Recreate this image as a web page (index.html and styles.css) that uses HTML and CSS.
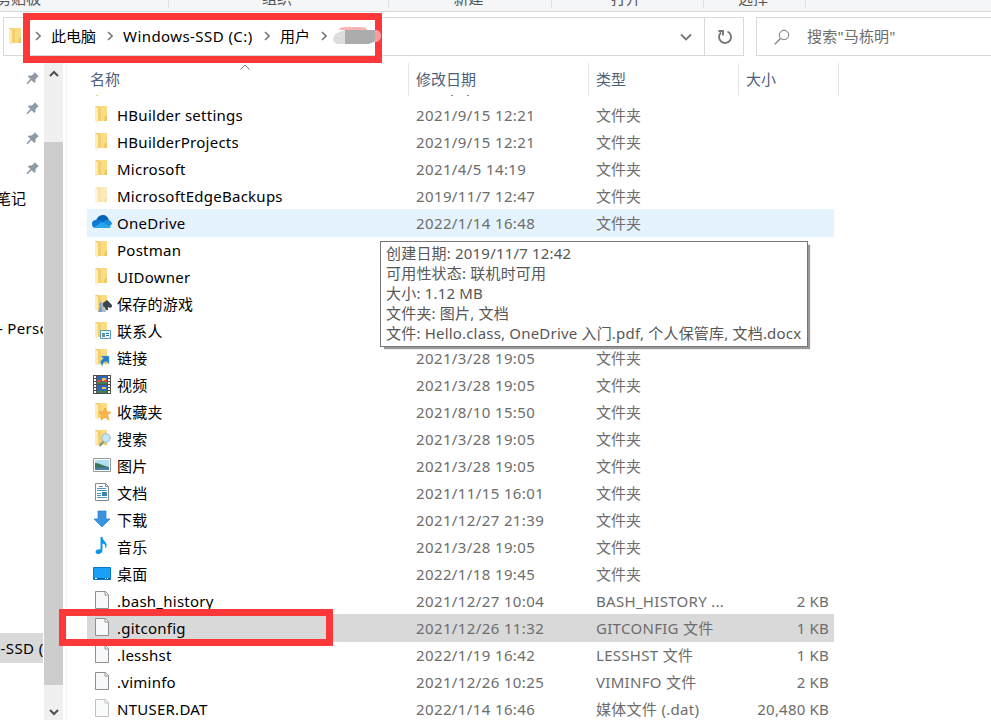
FILE: index.html
```html
<!DOCTYPE html>
<html lang="zh-CN">
<head>
  <meta charset="UTF-8">
  <title>文件资源管理器</title>
  <link rel="stylesheet" href="styles.css">
</head>
<body>
  <!-- Icons -->
  <svg class="defs">
    <symbol id="folder" viewBox="0 0 20 20">
      <path d="M3 1h12v15H5z" fill="#fbdc83"/>
      <path d="M6 2h3v14H6z" fill="#f3cf70"/>
      <path d="M13 11h2v5h-3z" fill="#edc663"/>
      <path d="M3 1l3 2v15l-3-2z" fill="#ffecb4"/>
      <path d="M3 1h3v2z" fill="#edc865"/>
    </symbol>
    <symbol id="file" viewBox="0 0 20 20">
      <path d="M3.500 .5h10l3 3v14h-13z" fill="#f7f8f9" stroke="#909090"/>
      <path d="M13 .5v3.500h3.500" fill="#fff" stroke="#909090"/>
    </symbol>
    <symbol id="cloud" viewBox="0 0 20 20">
      <path d="M4 8C5 4 8 2 11 2c3 0 5 2 6 5l-6 4z" fill="#0364b8"/>
      <path d="M4 7c-3 0-4 2-4 4 0 3 2 4 4 4l9-5C9 7 7 6 4 7z" fill="#0f78d4"/>
      <path d="M11 10c1-3 4-4 6-3 2 1 3 3 3 4l-3 3z" fill="#1490df"/>
      <path d="M2 14l8-5 9 5c-1 1-2 1-3 1H4c-1 0-2 0-2-1z" fill="#28a8ea"/>
    </symbol>
    <symbol id="games" viewBox="0 0 20 20">
      <use href="#folder"/>
      <path d="M15 6l4 4c3 3-1 5-3 3v3h-3v-3c-3 1-4-2-2-4z" fill="#3d444b"/>
      <path d="M6 18l1-3 1-3-1-2 2-2 2 1v3l2 3v3z" fill="#6f9dc0"/>
      <path d="M9 8l2 1v3l3 3v3h-4z" fill="#b4bcc2"/>
    </symbol>
    <symbol id="contacts" viewBox="0 0 20 20">
      <use href="#folder"/>
      <path d="M8.500 9.500h10v8h-10z" fill="#e5f4fa" stroke="#559bb7"/>
      <path d="M10 12h3v4h-3z" fill="#6d92a1"/>
      <path d="M14 12.500h3M14 14.500h3" stroke="#2b779a"/>
    </symbol>
    <symbol id="links" viewBox="0 0 20 20">
      <use href="#folder"/>
      <path d="M9 8h8v8l-2.500-2.500c-3 0-4 2-4 4.500-3-3-2-6 1-7.500z" fill="#2381cb" stroke="#6db1df" stroke-width=".5"/>
    </symbol>
    <symbol id="video" viewBox="0 0 20 20">
      <path d="M1 0h18v19H1z" fill="#505050"/>
      <path d="M3 1v17M17 1v17" stroke="#fff" stroke-width="2" stroke-dasharray="2 1"/>
      <path d="M5 1h10v8H5zM5 10h10v8H5z" fill="#2f63bd"/>
      <path d="M5 7l3-1 3 1 4-1v3H5zM5 16l4-1 2 1 4-1v3H5z" fill="#3f8052"/>
      <path d="M10 3h4v3h-4zM10 12h4v2h-4z" fill="#efc744"/>
      <path d="M5 5h4v2H5zM12 5h3v2h-3z" fill="#d94d43"/>
    </symbol>
    <symbol id="favorites" viewBox="0 0 20 20">
      <use href="#folder"/>
      <path d="M13 6l1.500 4H19l-3.500 3 1.500 5-4-3-4 3 1-5-3-3h4z" fill="#ffb74c" stroke="#ed9734" stroke-width=".7"/>
    </symbol>
    <symbol id="searches" viewBox="0 0 20 20">
      <use href="#folder"/>
      <path d="M12 12l-4.500 5" stroke="#858c91" stroke-width="2"/>
      <circle cx="14" cy="9" r="4.200" fill="#c7e6f7" stroke="#98b8c8"/>
    </symbol>
    <symbol id="pictures" viewBox="0 0 20 20">
      <path d="M1.500 2.500h17v13h-17z" fill="#fff" stroke="#929a9f"/>
      <path d="M3 4h14v10H3z" fill="#b4dcf3"/>
      <path d="M3 7c5 0 8 3 14 4v1H3z" fill="#3c735b"/>
      <path d="M3 11.500h14V14H3z" fill="#477fae"/>
    </symbol>
    <symbol id="documents" viewBox="0 0 20 20">
      <path d="M3.500 .5h10l3 3v14h-13z" fill="#fff" stroke="#858b8f"/>
      <path d="M13.500 .5v3h3" fill="none" stroke="#858b8f"/>
      <path d="M7 3.500h4M5 5.500h9M5 7.500h10M5 10.500h4M5 12.500h4M5 14.500h10" stroke="#4b98c6"/>
      <path d="M10 9h5v4h-5z" fill="#3a84b5"/>
    </symbol>
    <symbol id="downloads" viewBox="0 0 20 20">
      <path d="M6 1h8v8h4l-8 8-8-8h4z" fill="#3a94df" stroke="#277fc9" stroke-width=".7"/>
    </symbol>
    <symbol id="music" viewBox="0 0 20 20">
      <path d="M8.500 0h2c0 4 5 5 4 9-.3 1-.7 2-1.500 2 1-3-.5-4-2.500-4.500V13c0 5-7 5-7 2 0-2 3-3.500 5-2.500z" fill="#0796e9"/>
    </symbol>
    <symbol id="desktop" viewBox="0 0 20 20">
      <path d="M1.500 3.500h17v12h-17z" fill="#18a1f5" stroke="#0879c6"/>
      <path d="M2 14.500h16" stroke="#075e9c"/>
      <path d="M3 14.500h2M13 14.500h1M15 14.500h1" stroke="#fff"/>
    </symbol>
    <symbol id="pin" viewBox="0 0 14 14">
      <path d="M8.500 1L13 5.500l-1.300.3-2.200 2.400.1 2.600-1.300 1.200-2.800-2.800L1.800 13H.7v-1.100l3.700-3.800-2.600-2.500L3 4.500l2.800.1L8.200 2.300z" fill="#8e9ba6"/>
    </symbol>
    <symbol id="crumb" viewBox="0 0 6 10">
      <path d="M1 1l4 4-4 4" fill="none" stroke="#777" stroke-width="1.600"/>
    </symbol>
  </svg>

  <div class="ribbon">
    <span class="clipboard">剪贴板</span><span>组织</span><span>新建</span><span>打开</span><span>选择</span>
  </div>

  <div class="toolbar">
    <div class="address">
      <svg class="icon"><use href="#folder"/></svg>
      <svg class="crumb"><use href="#crumb"/></svg><span class="c1">此电脑</span>
      <svg class="crumb"><use href="#crumb"/></svg><span class="c2">Windows-SSD (C:)</span>
      <svg class="crumb"><use href="#crumb"/></svg><span class="c3">用户</span>
      <svg class="crumb"><use href="#crumb"/></svg>
      <svg class="dropdown" viewBox="0 0 12 8"><path d="M1 1.500l5 5 5-5" fill="none" stroke="#777" stroke-width="1.800"/></svg>
    </div>
    <div class="refresh">
      <svg viewBox="0 0 16 16"><path d="M10.500 2.500A6 6 0 1 1 4 3.500M1.500 2H6v4.500" fill="none" stroke="#777" stroke-width="1.900"/></svg>
    </div>
    <div class="search">
      <svg viewBox="0 0 16 16"><circle cx="10" cy="6" r="4.700" fill="none" stroke="#777"/><path d="M6.500 9.500L.7 15.300" stroke="#777" stroke-width="1.200"/></svg>
      <span>搜索"马栋明"</span>
    </div>
  </div>

  <div class="main">
    <div class="sidebar">
      <svg class="pin"><use href="#pin"/></svg>
      <svg class="pin"><use href="#pin"/></svg>
      <svg class="pin"><use href="#pin"/></svg>
      <svg class="pin"><use href="#pin"/></svg>
      <div class="nav notes">笔记</div>
      <div class="nav personal">- Personal</div>
      <div class="nav drive"><span>s-SSD (C:)</span></div>
    </div>
    <div class="scrollbar">
      <svg viewBox="0 0 10 7"><path d="M1 6l4-4 4 4" fill="none" stroke="#505050" stroke-width="2"/></svg>
      <div class="thumb"></div>
      <svg viewBox="0 0 10 7"><path d="M1 1l4 4 4-4" fill="none" stroke="#505050" stroke-width="2"/></svg>
    </div>

    <div class="files">
      <div class="columns">
        <span>名称</span><span>修改日期</span><span>类型</span><span>大小</span>
        <svg class="sort" viewBox="0 0 10 6"><path d="M.5 5.500L5 1l4.500 4.500" fill="none" stroke="#777"/></svg>
      </div>
      <div class="list">
        <!-- bottom edge of the row scrolled under the header -->
        <svg class="clipped" viewBox="0 0 400 2"><path d="M9 0h2v1H9z" fill="#f6cf80"/><path d="M364 0h2v1h-2zM380 0h2v1h-2z" fill="#888"/></svg>
        <div class="row"><svg class="icon"><use href="#folder"/></svg><span class="name">HBuilder settings</span><span class="date">2021/9/15 12:21</span><span>文件夹</span></div>
        <div class="row"><svg class="icon"><use href="#folder"/></svg><span class="name">HBuilderProjects</span><span class="date">2021/9/15 12:21</span><span>文件夹</span></div>
        <div class="row"><svg class="icon"><use href="#folder"/></svg><span class="name">Microsoft</span><span class="date">2021/4/5 14:19</span><span>文件夹</span></div>
        <div class="row"><svg class="icon faded"><use href="#folder"/></svg><span class="name">MicrosoftEdgeBackups</span><span class="date">2019/11/7 12:47</span><span>文件夹</span></div>
        <div class="row hover"><svg class="icon"><use href="#cloud"/></svg><span class="name">OneDrive</span><span class="date">2022/1/14 16:48</span><span>文件夹</span></div>
        <div class="row"><svg class="icon"><use href="#folder"/></svg><span class="name">Postman</span></div>
        <div class="row"><svg class="icon"><use href="#folder"/></svg><span class="name">UIDowner</span></div>
        <div class="row"><svg class="icon"><use href="#games"/></svg><span class="name">保存的游戏</span></div>
        <div class="row"><svg class="icon"><use href="#contacts"/></svg><span class="name">联系人</span></div>
        <div class="row"><svg class="icon"><use href="#links"/></svg><span class="name">链接</span><span class="date">2021/3/28 19:05</span><span>文件夹</span></div>
        <div class="row"><svg class="icon"><use href="#video"/></svg><span class="name">视频</span><span class="date">2021/3/28 19:05</span><span>文件夹</span></div>
        <div class="row"><svg class="icon"><use href="#favorites"/></svg><span class="name">收藏夹</span><span class="date">2021/8/10 15:50</span><span>文件夹</span></div>
        <div class="row"><svg class="icon"><use href="#searches"/></svg><span class="name">搜索</span><span class="date">2021/3/28 19:05</span><span>文件夹</span></div>
        <div class="row"><svg class="icon"><use href="#pictures"/></svg><span class="name">图片</span><span class="date">2021/3/28 19:05</span><span>文件夹</span></div>
        <div class="row"><svg class="icon"><use href="#documents"/></svg><span class="name">文档</span><span class="date">2021/11/15 16:01</span><span>文件夹</span></div>
        <div class="row"><svg class="icon"><use href="#downloads"/></svg><span class="name">下载</span><span class="date">2021/12/27 21:39</span><span>文件夹</span></div>
        <div class="row"><svg class="icon"><use href="#music"/></svg><span class="name">音乐</span><span class="date">2021/3/28 19:05</span><span>文件夹</span></div>
        <div class="row"><svg class="icon"><use href="#desktop"/></svg><span class="name">桌面</span><span class="date">2022/1/18 19:45</span><span>文件夹</span></div>
        <div class="row"><svg class="icon"><use href="#file"/></svg><span class="name">.bash_history</span><span class="date">2021/12/27 10:04</span><span class="type">BASH_HISTORY ...</span><span class="size">2 KB</span></div>
        <div class="row selected"><svg class="icon"><use href="#file"/></svg><span class="name">.gitconfig</span><span class="date">2021/12/26 11:32</span><span class="type">GITCONFIG 文件</span><span class="size">1 KB</span></div>
        <div class="row"><svg class="icon"><use href="#file"/></svg><span class="name">.lesshst</span><span class="date">2022/1/19 16:42</span><span class="type">LESSHST 文件</span><span class="size">1 KB</span></div>
        <div class="row"><svg class="icon"><use href="#file"/></svg><span class="name">.viminfo</span><span class="date">2021/12/26 10:25</span><span class="type">VIMINFO 文件</span><span class="size">2 KB</span></div>
        <div class="row"><svg class="icon faded"><use href="#file"/></svg><span class="name">NTUSER.DAT</span><span class="date">2022/1/14 16:46</span><span class="type">媒体文件 (.dat)</span><span class="size">20,480 KB</span></div>
      </div>
    </div>
  </div>

  <div class="tooltip">
    <div>创建日期: 2019/11/7 12:42</div>
    <div>可用性状态: 联机时可用</div>
    <div>大小: 1.12 MB</div>
    <div>文件夹: 图片, 文档</div>
    <div>文件: Hello.class, OneDrive 入门.pdf, 个人保管库, 文档.docx</div>
  </div>

  <!-- Red marks -->
  <div class="mark mark-path"></div>
  <div class="mark mark-file"></div>
  <svg class="smudge" viewBox="0 0 50 18">
    <path d="M6 3c0-3 5-3 10-3h10c5 0 8 1 8 3z" fill="#fbb4b4"/>
    <path d="M12 3v14H6c-8 0-8-9 0-12z" fill="#dedede"/>
    <path d="M12 3h31v11l-7 3H12z" fill="#acacac"/>
    <path d="M42 3c8-1 8 12 0 12z" fill="#fd9c9c"/>
  </svg>
</body>
</html>
```

FILE: styles.css
```css
* {
  box-sizing: border-box;
}
body {
  margin: 0;
  height: 720px;
  display: flex;
  flex-direction: column;
  overflow: hidden;
  position: relative;
  background: #fff;
  color: #000;
  font: 15px/20px "Noto Sans", "Noto Sans CJK SC", sans-serif;
  white-space: nowrap;
}
svg {
  display: block;
  flex: none;
}
.defs {
  position: absolute;
  width: 0;
  height: 0;
}
.icon {
  width: 20px;
  height: 20px;
}
.faded {
  opacity: 0.55;
}

/* Ribbon */
.ribbon {
  display: grid;
  grid-template-columns: 169px 220px 163px 152px 102px;
  height: 12px;
  background: #f5f6f7;
  border-bottom: 1px solid #d9dadb;
  color: #555;
}
.ribbon span {
  height: 8px;
  border-right: 1px solid #dfe0e1;
  display: flex;
  justify-content: center;
  align-items: flex-end;
  padding-right: 3px;
}
.ribbon .clipboard {
  margin-left: -131px;
  padding-right: 0;
}

/* Address bar */
.toolbar {
  display: flex;
  height: 51px;
  padding: 5px 0 7px 3px;
}
.address, .refresh, .search {
  height: 39px;
  border: 1px solid #d9d9d9;
  display: flex;
  align-items: center;
}
.address {
  width: 702px;
  padding-left: 2px;
}
.address span, .search span {
  margin-top: -2px;
}
.address .icon {
  margin-top: 1px;
}
.crumb {
  width: 6px;
  height: 10px;
  margin-top: -2px;
}
.address .icon + .crumb {
  margin-left: 9px;
}
.c1, .c2, .c3 {
  margin-left: 10px;
}
.c1 {
  width: 56px;
}
.c2 {
  width: 141px;
  letter-spacing: 0.43px;
}
.c3 {
  width: 41px;
}
.dropdown {
  width: 12px;
  height: 8px;
  margin-left: auto;
  margin-right: 12px;
}
.refresh {
  width: 39px;
  border-left: 0;
  justify-content: center;
}
.refresh svg, .search svg {
  width: 16px;
  height: 16px;
}
.refresh svg {
  margin-left: 2px;
}
.search {
  flex: 1;
  margin-left: 12px;
  border-right: 0;
  padding-left: 17px;
  color: #6d6d6d;
}
.search span {
  margin-left: 17px;
  letter-spacing: 0.2px;
}

/* Navigation pane */
.main {
  display: flex;
  flex: 1;
  min-height: 0;
}
.sidebar {
  width: 44px;
  overflow: hidden;
}
.pin {
  width: 14px;
  height: 14px;
  margin: 8px 0 16px 26px;
}
.nav {
  width: 43px;
  height: 30px;
  line-height: 30px;
  overflow: hidden;
}
.notes {
  margin-top: -8px;
  text-indent: -4px;
}
.personal {
  margin-top: 100px;
  text-indent: -2px;
  letter-spacing: 0.3px;
}
.drive {
  margin-top: 290px;
  background: #d9d9d9;
}
.drive span {
  margin-left: -7px;
  letter-spacing: 0.4px;
}
.scrollbar {
  width: 19px;
  background: #f0f0f0;
  display: flex;
  flex-direction: column;
  align-items: center;
  padding: 7px 0 4px;
}
.scrollbar svg {
  width: 10px;
  height: 7px;
}
.thumb {
  width: 19px;
  height: 543px;
  margin: 65px 0 auto;
  background: #cdcdcd;
}

/* File list */
.files {
  flex: 1;
  margin-left: 3px;
  padding-left: 20px;
  border-left: 1px solid #f3f3f3;
}
.columns {
  display: grid;
  grid-template-columns: 322px 180px 150px 100px;
  height: 33px;
  line-height: 32px;
  color: #4c607a;
  position: relative;
}
.columns span {
  border-right: 1px solid #e5e5e5;
  padding-left: 7px;
}
.columns span:first-child {
  padding-left: 3px;
}
.sort {
  position: absolute;
  left: 153px;
  top: 1px;
  width: 10px;
  height: 6px;
}
.clipped {
  width: 400px;
  height: 2px;
  margin: -1px 0 4px;
}
.row {
  display: grid;
  grid-template-columns: 30px 299px 180px 133px 100px;
  width: 747px;
  height: 28px;
  margin-bottom: -1px;
  line-height: 28px;
  color: #6d6d6d;
}
.row .icon {
  margin: 4px 0 0 5px;
}
.name {
  color: #000;
  letter-spacing: 0.25px;
}
.date {
  letter-spacing: 0.38px;
}
.type {
  letter-spacing: 0.3px;
}
.size {
  text-align: right;
  letter-spacing: 0.2px;
}
.hover {
  background: #e5f3ff;
}
.selected {
  background: #d9d9d9;
}

/* Overlays */
.tooltip {
  position: absolute;
  left: 380px;
  top: 241px;
  width: 428px;
  height: 106px;
  padding: 1px 5px;
  background: #fff;
  border: 1px solid #767676;
  box-shadow: 3px 3px 1px -1px #999;
  color: #575757;
  letter-spacing: 0.19px;
}
.mark {
  position: absolute;
  border: 7px solid #fd3838;
}
.mark-path {
  left: 23px;
  top: 13px;
  width: 359px;
  height: 50px;
}
.mark-file {
  left: 59px;
  top: 609px;
  width: 274px;
  height: 37px;
}
.smudge {
  position: absolute;
  left: 333px;
  top: 27px;
  width: 50px;
  height: 18px;
}
```
